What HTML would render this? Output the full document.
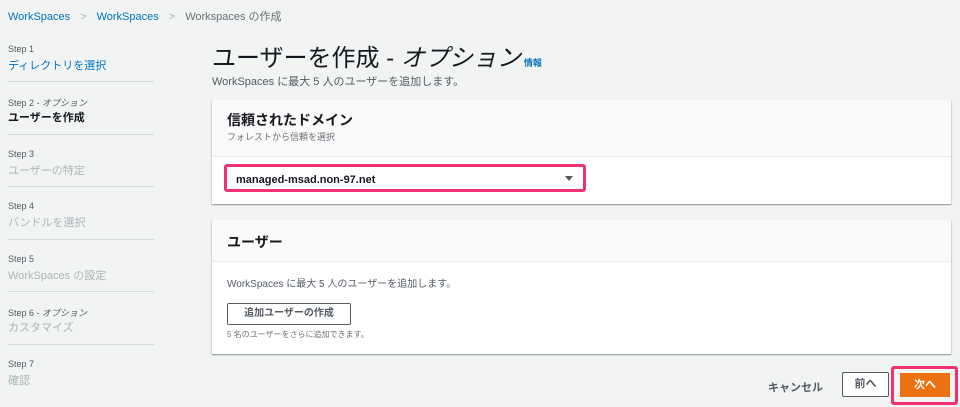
<!DOCTYPE html>
<html><head><meta charset="utf-8"><style>
*{box-sizing:border-box;margin:0;padding:0}
body{width:960px;height:407px;overflow:hidden;background:#f2f3f3;font-family:"Liberation Sans","Noto Sans CJK JP",sans-serif;color:#16191f;position:relative}
.a{position:absolute}
.bc{font-size:11px;top:8px;white-space:nowrap}
.blue{color:#0073bb}
.lab{font-size:9px;color:#545b64;left:8px}
.st{font-size:11px;left:8px;color:#aab7b8}
.hr{left:8px;width:146px;height:1px;background:#d5dbdb}
.card{background:#fff;left:212px;width:739px;box-shadow:0 1px 1px 0 rgba(0,28,36,.3),1px 1px 1px 0 rgba(0,28,36,.1),-1px 1px 1px 0 rgba(0,28,36,.1)}
.ch{background:#fafafa;border-bottom:1px solid #eaeded;position:absolute;left:0;right:0;top:0}
</style></head><body>
<div class="a bc" style="left:8px"><span class="blue">WorkSpaces</span><span style="color:#aab7b8;margin:0 10px">&gt;</span><span class="blue">WorkSpaces</span><span style="color:#aab7b8;margin:0 10px">&gt;</span><span style="color:#687078">Workspaces の作成</span></div>

<div class="a lab" style="top:44px">Step 1</div><div class="a st blue" style="top:57px;color:#0073bb">ディレクトリを選択</div><div class="a hr" style="top:81px"></div>
<div class="a lab" style="top:96px">Step 2 - <i>オプション</i></div><div class="a st" style="top:109px;color:#16191f;font-weight:bold">ユーザーを作成</div><div class="a hr" style="top:134px"></div>
<div class="a lab" style="top:149px">Step 3</div><div class="a st" style="top:162px">ユーザーの特定</div><div class="a hr" style="top:186px"></div>
<div class="a lab" style="top:201px">Step 4</div><div class="a st" style="top:214px">バンドルを選択</div><div class="a hr" style="top:239px"></div>
<div class="a lab" style="top:254px">Step 5</div><div class="a st" style="top:267px">WorkSpaces の設定</div><div class="a hr" style="top:291px"></div>
<div class="a lab" style="top:306px">Step 6 - <i>オプション</i></div><div class="a st" style="top:319px">カスタマイズ</div><div class="a hr" style="top:344px"></div>
<div class="a lab" style="top:359px">Step 7</div><div class="a st" style="top:372px">確認</div>

<div class="a" style="left:212px;top:38px;font-size:24px;white-space:nowrap;color:#16191f">ユーザーを作成 - <i>オプション</i><span style="font-size:9px;color:#0073bb;font-weight:bold;margin-left:3px">情報</span></div>
<div class="a" style="left:212px;top:73px;font-size:11px;color:#545b64">WorkSpaces に最大 5 人のユーザーを追加します。</div>

<div class="a card" style="top:100px;height:104px">
<div class="ch" style="height:57px"><div class="a" style="left:15px;top:10px;font-size:14px;font-weight:bold">信頼されたドメイン</div><div class="a" style="left:15px;top:30px;font-size:9px;color:#687078">フォレストから信頼を選択</div></div>
<div class="a" style="left:12px;top:64px;width:362px;height:28px;border:3px solid #f0336e;border-radius:3px;background:#fff"><div class="a" style="left:9px;top:7px;font-size:11px;font-weight:bold;color:#16191f">managed-msad.non-97.net</div><div class="a" style="right:10px;top:9px;width:0;height:0;border-left:4px solid transparent;border-right:4px solid transparent;border-top:5px solid #545b64"></div></div>
</div>

<div class="a card" style="top:220px;height:134px">
<div class="ch" style="height:42px"><div class="a" style="left:15px;top:12px;font-size:14px;font-weight:bold">ユーザー</div></div>
<div class="a" style="left:15px;top:55px;font-size:10px;color:#545b64">WorkSpaces に最大 5 人のユーザーを追加します。</div>
<div class="a" style="left:15px;top:83px;width:124px;height:22px;border:1px solid #545b64;border-radius:2px;font-size:10px;font-weight:bold;color:#545b64;text-align:center;line-height:20px">追加ユーザーの作成</div>
<div class="a" style="left:15px;top:109px;font-size:8px;color:#687078">5 名のユーザーをさらに追加できます。</div>
</div>

<div class="a" style="left:768px;top:379px;font-size:11px;font-weight:bold;color:#545b64">キャンセル</div>
<div class="a" style="left:842px;top:372px;width:47px;height:25px;border:1px solid #545b64;border-radius:2px;background:#fff;font-size:11px;font-weight:bold;color:#545b64;text-align:center;line-height:23px">前へ</div>
<div class="a" style="left:891px;top:366px;width:67px;height:39px;border:3px solid #f0336e;border-radius:3px"></div>
<div class="a" style="left:900px;top:373px;width:50px;height:24px;background:#ec7211;font-size:11px;font-weight:bold;color:#fff;text-align:center;line-height:24px">次へ</div>
</body></html>
